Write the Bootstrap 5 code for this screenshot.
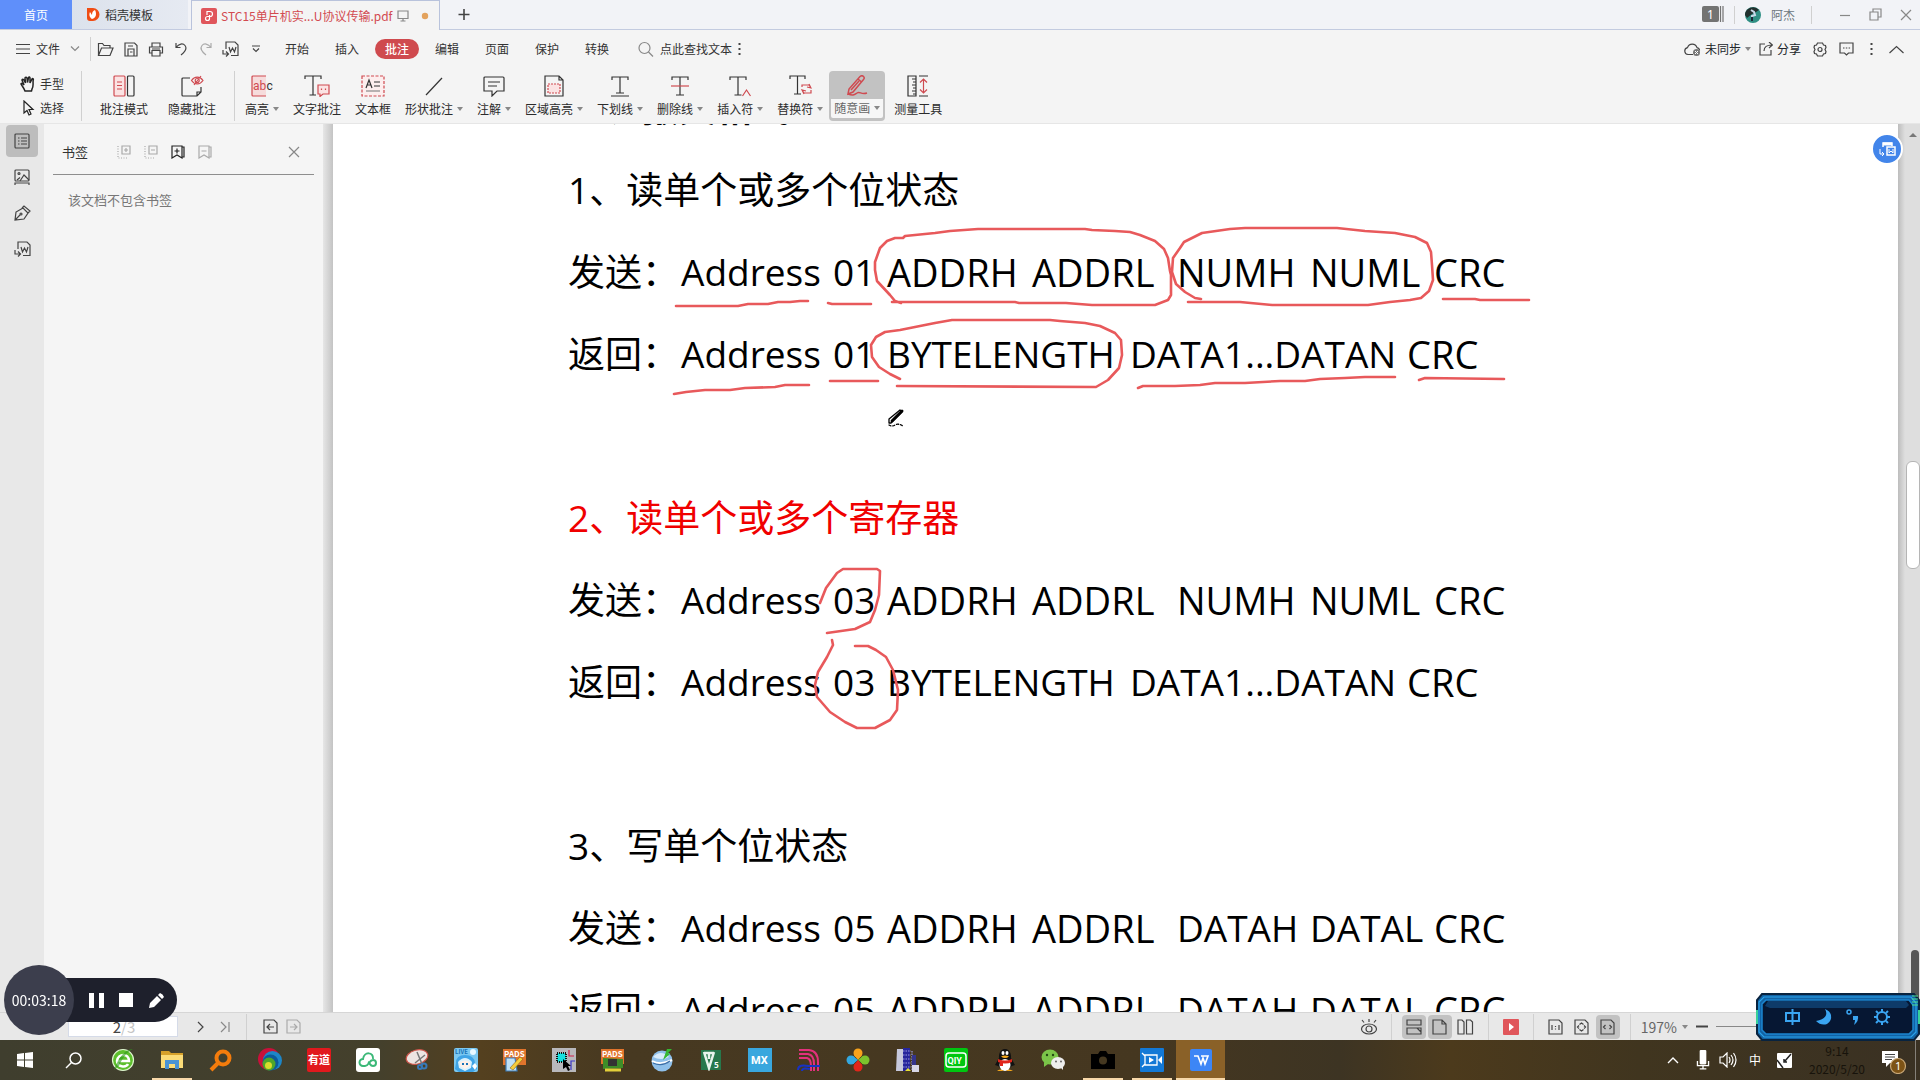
<!DOCTYPE html>
<html lang="zh-CN">
<head>
<meta charset="utf-8">
<meta name="viewport" content="width=device-width, initial-scale=1">
<title>STC15单片机实...U协议传输.pdf</title>
<link href="https://cdn.jsdelivr.net/npm/bootstrap@5.3.0/dist/css/bootstrap.min.css" rel="stylesheet">
<script src="https://cdn.jsdelivr.net/npm/bootstrap@5.3.0/dist/js/bootstrap.bundle.min.js"></script>
<style>
body{font-family:"Noto Sans CJK SC",sans-serif;font-size:12px;line-height:18px;color:#333;background:#f4f4f4}
button,input{font:inherit;color:inherit;background:none;border:0;padding:0}
button{display:inline-flex;align-items:center;justify-content:center}
svg{display:block;flex:none;fill:none;stroke:#444;stroke-width:1.2}
.r{stroke:#cf4a50}
svg.ic-mid{stroke:#888}
svg.ic-soft{stroke:#aaa}
svg.ic-dark{stroke:#222}
svg.ic-bold{stroke:#222;stroke-width:1.5}
svg.ic-plus{stroke-width:1.6}
.tabbar{height:30px;background:#f2f3f7;border-bottom:1px solid #c3cbe0}
.tab-home{width:72px;height:29px;background:#5f8ffa;color:#fff}
.tab-docer{width:116px;height:29px;background:linear-gradient(90deg,#dce2ec,#e6eaf2);padding-left:14px;gap:5px}
.tab-doc{width:249px;height:30px;margin-left:3px;background:#f4f4f4;border:1px solid #b9c3dc;border-bottom:0;color:#d24a50;padding-left:9px;gap:4px}
.rule{width:1px;background:#d0d0d0;flex:none}
.rule-tab{height:18px}
.rule-file{height:24px;margin:0 2px 0 10px}
.rule-tools{height:50px;margin:0 5px 0 8px}
.rule-modes{height:50px;margin-right:8px}
.user{gap:10px}
.menubar{height:38px}
.filebtn{gap:6px}
.mtabs{margin-left:4px}
.mtab{width:50px;height:20px}
.mtab.active span{background:#cf4a4e;color:#fff;border-radius:10px;padding:1px 10px;font-weight:500}
.qbtn{width:25px;height:24px}
.finder{gap:6px}
.ribbon{height:56px;border-bottom:1px solid #e6e6e6}
.pointer-tools{width:81px;gap:6px}
.toolset{gap:1px}
.tool{flex-direction:column;justify-content:flex-start;height:50px;padding:0 5px;color:#2b2b2b;border-radius:4px}
.tool svg{margin:4px 0 3px;stroke:#333}
.tool>span,.drop{display:flex;align-items:center;gap:4px}
.drop::after{content:"";border:3px solid transparent;border-top:4px solid #888;border-bottom:0}
.tool.active{background:#c2c2c2;padding:0;width:56px;color:#666}
.tool.active svg{margin-bottom:2px;stroke:#cf4a50;stroke-width:1.5}
.tool.active>span{background:#f6f6f6;width:52px;height:19px;justify-content:center;border-radius:0 0 2px 2px}
.mode{width:68px}
.viewer{min-height:0}
.rail{width:44px;background:#e8e8e8;padding-top:1px;gap:4px}
.rail button{width:32px;height:32px;border-radius:4px}
.rail .active{background:#bdbdbd}
.marks{width:279px;background:#f5f5f5;font-size:13px}
.marks-head{height:51px;margin:0 9px;padding:5px 14px 0 9px;border-bottom:1px solid #8e8e8e}
.marks-tools{margin-left:29px;gap:13px}
.empty-note{color:#777;padding:16px 24px}
.gutter{width:10px;background:linear-gradient(90deg,#e6e6e6,#c4c4c4)}
.sheet{background:#fff;overflow:hidden;position:relative;min-width:0}
.doc{margin-top:-57px;padding-left:235px;font-family:"Open Sans","Noto Sans CJK SC",sans-serif;font-size:37px;line-height:82px;color:#000;white-space:nowrap}
.doc p,.doc h2,.doc h3{margin:0;font-size:37px;line-height:82px;height:82px;font-weight:400;display:flex}
.doc h2{font-weight:700}
.doc .hot{color:#f00000}
.doc .lbl{width:113px}.doc .adr{width:152px}.doc .cod{width:54px}
.doc .w5{width:145px}.doc .w4{width:133px}.doc .w3{width:124px}.doc .wb{width:243px}.doc .wd{width:277px}
.doc .w5,.doc .w4,.doc .w3,.doc .crc{font-size:38px}
.doc .w4.dat,.doc .w3.dat{font-size:37px}
.ink{position:absolute;left:0;top:0;stroke:#e8595b;stroke-width:2.6;stroke-linejoin:round;stroke-linecap:round}
.scroller{width:22px;background:linear-gradient(90deg,#bdbdbd,#dedede 7px);position:relative}
.scroll-up{position:absolute;right:3px;top:9px}
.thumb-main{position:absolute;right:0;top:337px;width:14px;height:108px;background:#fff;border:1px solid #b5b5b5;border-radius:6px}
.thumb-dark{position:absolute;right:1px;top:826px;width:8px;height:62px;background:#555;border-radius:4px}
.to-word{position:absolute;right:17px;top:9px;width:32px;height:32px;border-radius:50%;background:#4285ea;border:2px solid #fff;z-index:2}
.to-word svg{stroke:#fff;stroke-width:1.5}
.status{height:29px;background:#e8e8e8;border-top:1px solid #d6d6d6;color:#666}
.status .rule{height:26px}
.pager{gap:16px;margin-left:19px}
.views{gap:2px}
.vbtn{width:24px;height:24px;border-radius:4px}
.vbtn.active{background:#c2c2c2}
.rule-a{margin:0 10px 0 13px}
.rule-b{margin:0 14px 0 10px}
.rule-c{margin:0 10px 0 14px}
.rule-d{margin:0 10px}
.zoomval{font-size:14px;gap:5px}
.pagebox{width:110px;height:21px;margin-left:68px;background:#fff;border:1px solid #d5dbe8;font-size:15px;color:#c5c5c5}
.pagebox input{width:52px;text-align:right;color:#444}
.zoomer{appearance:none;width:160px;height:14px;margin:0 44px 0 8px}
.zoomer::-webkit-slider-runnable-track{height:1px;background:#888}
.zoomer::-webkit-slider-thumb{appearance:none;width:9px;height:15px;margin-top:-7px;background:#999;border-radius:3px}
.taskbar{height:40px;background:linear-gradient(90deg,#3f3e2e 0,#44402c 380px,#54401f 480px,#473921 620px,#453720 1150px,#3d3423 1340px,#4c3a1c 1450px,#40351f 1640px,#3a3123 1920px)}
.taskbar svg{stroke:none}
.app{width:49px;height:40px;border-bottom:2px solid transparent;padding-top:2px}
.app.open{background:linear-gradient(#f8d9aa,#f8d9aa) center bottom/40px 2px no-repeat border-box}
.app.cur{background:#8a6128;border-color:#f8d9aa}
.app svg text{font-weight:700}
.clock{width:74px;color:#17130b;text-align:center;line-height:18px}
.rule-desk{height:40px;opacity:.5}
.rec{position:fixed;left:4px;bottom:45px;height:70px;z-index:5}
.rec-time{width:70px;height:70px;border-radius:50%;background:#3c3e4d;color:#fff;font-size:14px;z-index:1}
.rec-bar{height:44px;width:138px;margin-left:-35px;padding-left:50px;border-radius:0 22px 22px 0;background:#1e202c;gap:15px}
.rec-bar svg{fill:#fff;stroke:none}
.ime{position:fixed;right:0;bottom:39px;width:164px;height:48px;z-index:5}
.ime svg{stroke:none}
</style>
</head>
<body class="vh-100 d-flex flex-column overflow-hidden">

<header>
<div class="tabbar d-flex">
  <button class="tab-home">首页</button>
  <button class="tab-docer justify-content-start"><svg width="14" height="15" viewBox="0 0 14 15"><path d="M1 1h6a6.5 6.5 0 0 1 0 13H4a3 3 0 0 1-3-3z" fill="#f04d14" stroke="none"/><path d="M6 12C3 10 3 7 4 5l2 3c0-3 1-4 3-5 2 4 1 8-3 9z" fill="#fff" stroke="none"/></svg>稻壳模板</button>
  <div class="tab-doc d-flex align-items-center"><svg width="16" height="16" viewBox="0 0 16 16"><rect width="16" height="16" rx="2" fill="#e0565b" stroke="none"/><path d="M6 7V3.500h3a2.300 2.300 0 0 1 0 5H6.500a2 2 0 1 0 2 2V7" stroke="#fff"/></svg><span>STC15单片机实...U协议传输.pdf</span><svg class="ic-mid" width="12" height="12" viewBox="0 0 12 12"><path d="M1 1h10v7.500H1zM6 8.500V11M3.500 11h5"/></svg><svg class="ms-1" width="12" height="8" viewBox="0 0 12 8"><circle cx="8" cy="4" r="3.200" fill="#e3a25c" stroke="none"/></svg></div>
  <button class="px-3" aria-label="新建标签"><svg class="ic-plus" width="15" height="13" viewBox="0 0 15 13"><path d="M8 1v11M2.500 6.500h11"/></svg></button>
  <div class="ms-auto d-flex align-items-center">
    <div class="user d-flex align-items-center">
    <svg width="22" height="17" viewBox="0 0 22 17"><rect width="17" height="16" rx="2" fill="#737373" stroke="none"/><path d="M18.500 0v16M21 0v16" stroke="#737373"/><text x="5" y="12.500" font-size="12" font-family="Noto Sans" fill="#fff" stroke="none">1</text></svg>
    <div class="rule rule-tab"></div>
    <svg width="16" height="16" viewBox="0 0 16 16"><circle cx="8" cy="8" r="8" fill="#2f8f84" stroke="none"/><path d="M0 8a8 8 0 0 1 14-5l-3 2-4 2-5 4z" fill="#22302e" stroke="none"/><path d="M6 3l3 2 1 3-3 1v4" stroke="#c8d8e8" stroke-width="2"/><path d="M7 10v4" stroke="#1c2a3a" stroke-width="2"/></svg>
    <span class="text-secondary">阿杰</span>
    </div>
    <div class="rule rule-tab ms-3"></div>
    <button class="ms-4" aria-label="最小化"><svg class="ic-mid" width="17" height="17" viewBox="0 0 17 17"><path d="M4 9.500h10"/></svg></button>
    <button class="ms-3" aria-label="还原"><svg class="ic-mid" width="13" height="13" viewBox="0 0 13 13"><path d="M1 4h8v8H1zM4 4V1h8v8H9"/></svg></button>
    <button class="ms-3 me-2" aria-label="关闭"><svg class="ic-mid" width="14" height="12" viewBox="0 0 14 12"><path d="M3 1l10 10M13 1L3 11"/></svg></button>
  </div>
</div>

<nav class="menubar d-flex align-items-center">
  <button class="filebtn ms-3"><svg width="14" height="12" viewBox="0 0 14 12"><path d="M0 1.500h14M0 6h14M0 10.500h14"/></svg><span class="me-1">文件</span><svg class="ic-mid" width="10" height="6" viewBox="0 0 10 6"><path d="M1 .5l4 4 4-4"/></svg></button>
  <div class="rule rule-file"></div>
  <button class="qbtn" aria-label="打开"><svg width="17" height="15" viewBox="0 0 17 15"><path d="M1.500 13V1.500h4l1.500 2h6V6M1.500 13.500h11.500L16 6H4.500z"/></svg></button>
  <button class="qbtn" aria-label="保存"><svg width="14" height="15" viewBox="0 0 14 15"><path d="M1 1h9.500L13 3.500V14H1zM4 14V7h6v7M4 4h5M6 10h2.500"/></svg></button>
  <button class="qbtn" aria-label="打印"><svg width="16" height="15" viewBox="0 0 16 15"><path d="M4 5V1h8v4M4 11H1.500V5h13v6H12M4 8.500h8V14H4zM4 7h8"/></svg></button>
  <button class="qbtn" aria-label="撤销"><svg width="14" height="14" viewBox="0 0 14 14"><path d="M2 1v4.500h4.500M2 5.500C5 1.500 9 1 11 3.500S12 9 7 13"/></svg></button>
  <button class="qbtn" aria-label="重做"><svg class="ic-soft" width="14" height="14" viewBox="0 0 14 14"><path d="M12 1v4.500H7.500M12 5.500C9 1.500 5 1 3 3.500S2 9 7 13"/></svg></button>
  <button class="qbtn" aria-label="转为Word"><svg width="17" height="16" viewBox="0 0 17 16"><path d="M4 8V1h9l3 3v10.500H9M7 6l1.500 5L10.500 7l2 4L14 6M1 9v4h5M4 10.500L6.500 13 4 15.500"/></svg></button>
  <button class="qbtn" aria-label="更多"><svg width="8" height="8" viewBox="0 0 8 8"><path d="M0 1h8M1 3.500l3 3 3-3"/></svg></button>
  <div class="mtabs d-flex">
  <button class="mtab">开始</button><button class="mtab">插入</button><button class="mtab active"><span>批注</span></button><button class="mtab">编辑</button><button class="mtab">页面</button><button class="mtab">保护</button><button class="mtab">转换</button>
  </div>
  <button class="finder ms-3"><svg class="ic-mid" width="16" height="16" viewBox="0 0 16 16"><circle cx="6.500" cy="7" r="5.500"/><path d="M10.500 11l4.500 4.500"/></svg><span>点此查找文本</span><svg width="3" height="14" viewBox="0 0 3 14"><path d="M1.500 1v2M1.500 6v2M1.500 11v2" stroke-width="2"/></svg></button>
  <div class="ms-auto d-flex align-items-center">
    <button><svg class="me-1" width="17" height="14" viewBox="0 0 17 14"><path d="M9 12.500H4a3.500 3.500 0 0 1-.5-6.900 5 5 0 0 1 9.500 0q2.500.5 2.500 3"/><circle cx="12.500" cy="10.500" r="3.500" fill="#777" stroke="none"/><path d="M11 9l3 3M14 9l-3 3" stroke="#fff" stroke-width="1"/></svg><span class="drop text-dark">未同步</span></button>
    <button class="ms-2"><svg width="14" height="14" viewBox="0 0 14 14"><path d="M6 2H1v11h11V8M5 9c0-4 3-6 8-6M10 0l3.500 3L10 6"/></svg><span class="ms-1 text-dark">分享</span></button>
    <button class="ms-2 ps-1" aria-label="设置"><svg width="14" height="15" viewBox="0 0 14 15"><path d="M4.500 1h5l1 2 2 .5.500 2-1 2 1 2-.5 2-2 .5-1 2h-5l-1-2-2-.5-.5-2 1-2-1-2 .5-2 2-.5z"/><circle cx="7" cy="7.500" r="2"/></svg></button>
    <button class="ms-2 ps-1" aria-label="反馈"><svg width="15" height="14" viewBox="0 0 15 14"><path d="M1 1h13v10H9.500L7.500 13l-2-2H1z"/><path d="M4 6h1.500M6.800 6h1.500M9.600 6h1.500"/></svg></button>
    <button class="ms-3" aria-label="更多"><svg width="3" height="14" viewBox="0 0 3 14"><path d="M1.500 1v2M1.500 6v2M1.500 11v2" stroke-width="2"/></svg></button>
    <button class="mx-3" aria-label="收起"><svg width="15" height="9" viewBox="0 0 15 9"><path d="M.5 8l7-6.500 7 6.500"/></svg></button>
  </div>
</nav>

<div class="ribbon d-flex align-items-center">
  <div class="pointer-tools d-flex flex-column ps-3">
    <button class="justify-content-start ms-1"><svg class="ic-bold me-1" width="16" height="16" viewBox="0 0 16 16"><path d="M5 15C4 12 2 10 1 8c0-1 1-1 3 1L2 4c0-1 1-1 2 0l1.500 3L5 2c0-1 1.500-1 2 0l.5 4.500L8.500 1.500c.5-1 1.500-.5 1.500.5V7l2-4c.5-.8 1.500-.4 1.300.5C12.500 7 14 10 12 13l-.5 2z"/></svg>手型</button>
    <button class="justify-content-start ms-1"><svg class="ic-dark me-1" width="16" height="16" viewBox="0 0 16 16"><path d="M4 1v12l3-2.500L9 15l2-1-2-4.500h4z"/></svg>选择</button>
  </div>
  <div class="rule rule-modes"></div>
  <button class="tool mode"><svg width="22" height="22" viewBox="0 0 22 22"><rect class="r" x="1" y="1" width="11" height="20" rx="1" fill="#fbe3e3"/><path class="r" d="M4 7h5M4 10.500h5M4 14h5"/><rect x="14.500" y="1" width="6.500" height="20" rx="1"/></svg>批注模式</button>
  <button class="tool mode"><svg width="24" height="22" viewBox="0 0 24 22"><path d="M10 3H3a1 1 0 0 0-1 1v16a1 1 0 0 0 1 1h14l4-4v-5M17 21v-4h4"/><path class="r" d="M11.500 5.500c3-4.500 8.500-4.500 11.500 0-3 4.500-8.500 4.500-11.500 0zM14 10L21 1"/><circle class="r" cx="17.200" cy="5.500" r="2"/></svg>隐藏批注</button>
  <div class="rule rule-tools"></div>
  <div class="toolset d-flex">
  <div class="d-flex gap-1">
  <button class="tool"><svg width="22" height="22" viewBox="0 0 22 22"><rect x="1" y="1" width="14" height="20" fill="#f6dcdc" stroke="none"/><path class="r" d="M15 1H2a1 1 0 0 0-1 1v18a1 1 0 0 0 1 1h13"/><text x="2" y="15" font-size="12" font-family="Roboto" fill="#cf4a50" stroke="none">ab</text><text x="15.500" y="15" font-size="12" font-family="Roboto" fill="#333" stroke="none">c</text></svg><span class="drop">高亮</span></button>
  <button class="tool"><svg width="26" height="22" viewBox="0 0 26 22"><path d="M1 4V1h16v3M9 1v19M5.500 20H12"/><path class="r" d="M14 10h11v9h-6l-3 2.500V19h-2z" fill="#fbe3e3"/><path class="r" d="M17.500 13.500v1.500M21.500 13.500v1.500"/></svg>文字批注</button>
  <button class="tool"><svg width="24" height="22" viewBox="0 0 24 22"><rect class="r" x="1" y="1" width="22" height="20" fill="#fdeeee" stroke-dasharray="3 1.500"/><path d="M5 13L8 5l3 8M6 10h4M13 7h6M13 11h6"/><path d="M5 16h14" stroke="#888"/></svg>文本框</button>
  <button class="tool"><svg width="18" height="22" viewBox="0 0 18 22"><path d="M1 20L17 3"/></svg><span class="drop">形状批注</span></button>
  <button class="tool"><svg width="22" height="22" viewBox="0 0 22 22"><path d="M2 2h18a1 1 0 0 1 1 1v13h-7l-5 5v-5H1V3a1 1 0 0 1 1-1zM5 7h12M5 11h9"/></svg><span class="drop">注解</span></button>
  <button class="tool"><svg width="20" height="22" viewBox="0 0 20 22"><path d="M1 1h14l4 4v16H1zM15 1v4h4"/><rect class="r" x="4" y="9" width="12" height="9" fill="#fbe3e3" stroke-dasharray="2 1"/></svg><span class="drop">区域高亮</span></button>
  <button class="tool"><svg width="20" height="22" viewBox="0 0 20 22"><path d="M2 5V2h16v3M10 2v16M6 18h8M1 21h18"/></svg><span class="drop">下划线</span></button>
  <button class="tool"><svg width="20" height="22" viewBox="0 0 20 22"><path d="M2 5V2h16v3M10 2v18M6 20h8"/><path class="r" d="M1 11h18"/></svg><span class="drop">删除线</span></button>
  <button class="tool"><svg width="22" height="22" viewBox="0 0 22 22"><path d="M1 5V2h16v3M9 2v18M5.500 20h7"/><path class="r" d="M13.500 21l4-6 4 6"/></svg><span class="drop">插入符</span></button>
  <button class="tool"><svg width="23" height="22" viewBox="0 0 23 22"><path d="M1 4V1h15v3M8.500 1v18M5 19h7"/><path class="r" d="M13 12v-2h7l2 3M20 9l2 4-4-1M22 15v3h-7l-2-3M15 19l-2-4 4 1"/></svg><span class="drop">替换符</span></button>
  </div>
  <div class="d-flex gap-1">
  <button class="tool active"><svg width="22" height="22" viewBox="0 0 22 22"><path d="M2 19l1-5L14 1.500q2-1.500 3.500 0t0 3L7 17zM12 4l3.500 3M5 15l8-9M2 19c5 2 6 1 9-1s4 2 10 0"/></svg><span class="drop">随意画</span></button>
  <button class="tool"><svg width="22" height="22" viewBox="0 0 22 22"><path d="M1 1h8v20H1zM5 4h4M6 7h3M5 10h4M6 13h3M5 16h4M6 19h3M12 1h9M12 21h9"/><path class="r" d="M16.500 4v14M13 7.500L16.500 4 20 7.500M13 14.500l3.500 3.500 3.500-3.500"/></svg>测量工具</button>
  </div></div>
</div>
</header>

<main class="viewer d-flex flex-grow-1">
  <nav class="rail d-flex flex-column align-items-center">
    <button class="active" aria-label="书签"><svg width="16" height="16" viewBox="0 0 16 16"><rect x="1" y="1" width="14" height="14" rx="1"/><path d="M4 5h1.500M7 5h6M4 8h1.500M7 8h6M4 11h1.500M7 11h6"/></svg></button>
    <button aria-label="缩略图"><svg width="16" height="17" viewBox="0 0 16 17"><rect x="1" y="1" width="14" height="11" rx="1"/><circle cx="5" cy="4.500" r="1"/><path d="M3 11l3-2.500M6 12l4-6 5 5M1 16v-2h14v2"/></svg></button>
    <button aria-label="签名"><svg width="17" height="16" viewBox="0 0 17 16"><path d="M1 15l1-8 7-4 5 5-4 6zM8 3l2-2 6 5-2 2M1 15l5-5"/><circle cx="7" cy="9" r="1"/></svg></button>
    <button aria-label="转为Word"><svg width="17" height="16" viewBox="0 0 17 16"><path d="M4 8V1h9l3 3v10.500H9M7 6l1.500 5L10.500 7l2 4L14 6M1 9v4h5M4 10.500L6.500 13 4 15.500"/></svg></button>
  </nav>
  <aside class="marks">
    <div class="marks-head d-flex align-items-center">
      <span>书签</span>
      <div class="marks-tools d-flex">
      <button aria-label="展开"><svg class="ic-soft" width="14" height="14" viewBox="0 0 14 14"><path d="M5 1h8v8H5zM9 3v4M7 5h4"/><path d="M1 1v12h10" stroke-dasharray="1 1.500"/></svg></button>
      <button aria-label="折叠"><svg class="ic-soft" width="14" height="14" viewBox="0 0 14 14"><path d="M5 1h8v8H5zM7 5h4"/><path d="M1 1v12h10" stroke-dasharray="1 1.500"/></svg></button>
      <button aria-label="添加书签"><svg class="ic-dark" width="14" height="14" viewBox="0 0 14 14"><path d="M1 1h10v12l-5-3-5 3zM11 2h2v10h-2M6 3.500v5M3.500 6h5"/></svg></button>
      <button aria-label="删除书签"><svg class="ic-soft" width="14" height="14" viewBox="0 0 14 14"><path d="M1 1h10v12l-5-3-5 3zM11 2h2v10h-2M3.500 6h5"/></svg></button>
      </div>
      <button class="ms-auto" aria-label="关闭"><svg class="ic-mid" width="12" height="12" viewBox="0 0 12 12"><path d="M1 1l10 10M11 1L1 11"/></svg></button>
    </div>
    <div class="empty-note">该文档不包含书签</div>
  </aside>
  <div class="gutter"></div>
  <section class="flex-grow-1 d-flex position-relative">
  <div class="sheet flex-grow-1">
    <article class="doc">
      <h2>二、报文格式</h2>
      <h3>1、读单个或多个位状态</h3>
      <p><span class="lbl">发送：</span><span class="adr">Address</span><span class="cod">01</span><span class="w5">ADDRH</span><span class="w5">ADDRL</span><span class="w4">NUMH</span><span class="w3">NUML</span><span class="crc">CRC</span></p>
      <p><span class="lbl">返回：</span><span class="adr">Address</span><span class="cod">01</span><span class="wb">BYTELENGTH</span><span class="wd">DATA1...DATAN</span><span class="crc">CRC</span></p>
      <p></p>
      <h3 class="hot">2、读单个或多个寄存器</h3>
      <p><span class="lbl">发送：</span><span class="adr">Address</span><span class="cod">03</span><span class="w5">ADDRH</span><span class="w5">ADDRL</span><span class="w4">NUMH</span><span class="w3">NUML</span><span class="crc">CRC</span></p>
      <p><span class="lbl">返回：</span><span class="adr">Address</span><span class="cod">03</span><span class="wb">BYTELENGTH</span><span class="wd">DATA1...DATAN</span><span class="crc">CRC</span></p>
      <p></p>
      <h3>3、写单个位状态</h3>
      <p><span class="lbl">发送：</span><span class="adr">Address</span><span class="cod">05</span><span class="w5">ADDRH</span><span class="w5">ADDRL</span><span class="w4 dat">DATAH</span><span class="w3 dat">DATAL</span><span class="crc">CRC</span></p>
      <p><span class="lbl">返回：</span><span class="adr">Address</span><span class="cod">05</span><span class="w5">ADDRH</span><span class="w5">ADDRL</span><span class="w4 dat">DATAH</span><span class="w3 dat">DATAL</span><span class="crc">CRC</span></p>
    </article>
    <svg class="ink" width="1565" height="887" viewBox="333 124 1565 887">
      <path d="M676 306H738L748 304H768L778 302 790 302 800 301 808 301"/>
      <path d="M828 303L832 304H871"/>
      <path d="M901 303L895 301 890 295 877 281 875 270V262L880 248 887 241 895 238 903 238 905 236 915 235 935 233 950 231 978 229H1085L1092 230 1115 231 1130 232 1140 235 1155 241 1164 249 1168 258 1170 271 1171 275V295L1168 300 1155 305H1092L1066 303H1019L1015 302H892"/>
      <path d="M1201 299L1195 298 1185 292 1176 284 1172 272 1173 258 1180 248 1184 242 1202 233 1230 229 1245 228H1337L1365 231 1395 233 1415 237 1427 243 1431 252 1432 265 1433 280 1429 291 1421 298 1410 300 1390 302 1368 305H1272L1240 302H1188"/>
      <path d="M1443 299H1475L1480 300H1529"/>
      <path d="M674 394L686 392 705 390H730L745 388 775 387 785 385H809"/>
      <path d="M830 381H878"/>
      <path d="M900 379L890 374 879 367 872 357 871 345 876 337 885 332 900 330 915 327 935 323 952 320H1050L1060 321 1085 323 1100 326 1115 333 1121 340 1122 355 1119 368 1108 380 1096 387 897 386"/>
      <path d="M1138 388L1143 386H1175L1200 385 1215 383H1245L1280 381H1305L1320 379 1345 378 1365 377H1395"/>
      <path d="M1419 380L1425 378 1504 379"/>
      <path d="M820 603L826 588 837 573 843 569H877L880 571 879 595 875 610 870 622 855 629 827 633"/>
      <path d="M832 640L833 645 827 657 818 672 815 685 817 697 830 712 845 722 857 728H875L890 720 897 710 898 690 893 670 886 657 876 650 868 646H855"/>
      <g stroke="#000" stroke-width="1.300"><path d="M889 423V419L900 410 902 412 891 423z"/><path d="M892 421L902 411" stroke-width="3"/><path d="M889 425q3 2 6 0t8 1" stroke-dasharray="2 2"/></g>
    </svg>
  </div>
  <div class="scroller"><svg class="scroll-up" width="8" height="5" viewBox="0 0 8 5"><path d="M0 4L4 0l4 4z" fill="#777" stroke="none"/></svg><div class="thumb-main"></div><div class="thumb-dark"></div></div>
  <button class="to-word" aria-label="转为Word"><svg width="18" height="16" viewBox="0 0 18 16"><path d="M5 6V2h9v3"/><path d="M5 3h9" stroke-width="3"/><rect x="9" y="6" width="8" height="8"/><path d="M11 8v4l2-2 2 2V8M2 8v5h4M4 11l2 2-2 2" stroke-width="1"/></svg></button>
  </section>
</main>

<footer class="status d-flex align-items-center">
  <label class="pagebox d-flex align-items-center"><input value="2" aria-label="页码">/3</label>
  <div class="pager d-flex align-items-center">
  <button aria-label="下一页"><svg width="7" height="12" viewBox="0 0 7 12"><path d="M1 1l5 5-5 5"/></svg></button>
  <button aria-label="末页"><svg class="ic-mid" width="10" height="12" viewBox="0 0 10 12"><path d="M1 1l5 5-5 5M9 1v10"/></svg></button>
  <div class="rule"></div>
  <div class="d-flex gap-2">
  <button aria-label="后退"><svg width="15" height="15" viewBox="0 0 15 15"><path d="M1 1h10l3 3v10H1zM4 8h7M7 5L4 8l3 3"/></svg></button>
  <button aria-label="前进"><svg class="ic-soft" width="15" height="15" viewBox="0 0 15 15"><path d="M1 1h10l3 3v10H1zM4 8h7M8 5l3 3-3 3"/></svg></button>
  </div></div>
  <div class="ms-auto d-flex align-items-center">
    <button aria-label="护眼"><svg width="18" height="17" viewBox="0 0 18 17"><ellipse cx="9" cy="11" rx="7.500" ry="5"/><circle cx="9" cy="11" r="3"/><path d="M9 1v3M2 2l2 2.500M16 2l-2 2.500"/></svg></button>
    <div class="rule rule-a"></div>
    <div class="views d-flex">
    <button class="vbtn active" aria-label="连续"><svg width="16" height="16" viewBox="0 0 16 16"><path d="M1 1h14v5H1zM15 9H1v6h14zM11 9l4 4"/></svg></button>
    <button class="vbtn active" aria-label="单页"><svg width="15" height="16" viewBox="0 0 15 16"><path d="M1 1h9l4 4v10H1zM10 1v4h4"/></svg></button>
    <button class="vbtn" aria-label="双页"><svg width="17" height="16" viewBox="0 0 17 16"><path d="M1 1h4l2 2v12H1zM9.500 1h4l2 2v12h-6z"/></svg></button>
    </div>
    <div class="rule rule-b"></div>
    <button aria-label="播放"><svg width="16" height="16" viewBox="0 0 16 16"><rect width="16" height="16" rx="1" fill="#e0565b" stroke="none"/><path d="M6 4l5 4-5 4z" fill="#fff" stroke="none"/></svg></button>
    <div class="rule rule-c"></div>
    <div class="views d-flex">
    <button class="vbtn" aria-label="实际大小"><svg width="15" height="16" viewBox="0 0 15 16"><path d="M1 1h10l3 3v11H1zM4 6v5M11 6v5M7.500 7v1M7.500 9.500v1"/></svg></button>
    <button class="vbtn" aria-label="适合页面"><svg width="15" height="16" viewBox="0 0 15 16"><path d="M1 1h10l3 3v11H1zM5.500 5.500l2-1.500 2 1.500M5.500 10.500l2 1.500 2-1.500M5 6.500L3.500 8 5 9.500M10 6.500L11.500 8 10 9.500"/></svg></button>
    <button class="vbtn active" aria-label="适合宽度"><svg width="15" height="16" viewBox="0 0 15 16"><path d="M1 1h10l3 3v11H1zM5.500 6l-2 2 2 2M9.500 6l2 2-2 2"/></svg></button>
    </div>
    <div class="rule rule-d"></div>
    <button class="drop zoomval">197%</button>
    <button class="ms-2" aria-label="缩小"><svg width="12" height="3" viewBox="0 0 12 3"><path d="M0 1.500h12" stroke-width="2"/></svg></button>
    <input class="zoomer" type="range" min="0" max="100" value="50" aria-label="缩放">
  </div>
</footer>

<div class="taskbar d-flex">
  <button class="app" aria-label="开始"><svg width="16" height="16" viewBox="0 0 16 16"><path fill="#fff" d="M0 2l7-1v6.500H0zM8 1l8-1v7.500H8zM0 8.500h7V15l-7-1zM8 8.500h8V16l-8-1z"/></svg></button>
  <button class="app" aria-label="搜索"><svg width="17" height="17" viewBox="0 0 17 17"><g stroke="#fff" stroke-width="1.500"><circle cx="10.500" cy="6.500" r="5.500"/><path d="M6.500 10.500L1 16"/></g></svg></button>
  <button class="app" aria-label="浏览器"><svg width="24" height="24" viewBox="0 0 24 24"><circle cx="12" cy="12" r="10.500" fill="#5dbf2c" stroke="#dff5cf"/><path d="M6 13h12c0-8-11-8-12 0 0 6 9 7 11 3" stroke="#fff" stroke-width="2.500"/><path d="M3 22C8 8 15 1 22 1c-6 3-10 8-14 17" fill="#2f9a1c" opacity=".6"/></svg></button>
  <button class="app open" aria-label="资源管理器"><svg width="22" height="20" viewBox="0 0 22 20"><path d="M0 1h8l2 2h12v15H0z" fill="#d6a12b"/><path d="M0 5h22v13H0z" fill="#fbdc78"/><path d="M4 10h14v9h-4v-5H8v5H4z" fill="#4a94d4"/></svg></button>
  <button class="app" aria-label="Everything"><svg width="23" height="23" viewBox="0 0 23 23"><g stroke="#f47c0c" stroke-width="4"><circle cx="14" cy="9" r="6.500"/><path d="M9.500 13.500L2 21"/></g></svg></button>
  <button class="app" aria-label="浏览器2"><svg width="25" height="24" viewBox="0 0 25 24"><circle cx="12" cy="11" r="11" fill="#c9103a"/><circle cx="15.500" cy="12.500" r="9.500" fill="#1d86c8"/><circle cx="13.500" cy="14.500" r="8" fill="#0d5a9a"/><circle cx="12" cy="16" r="6.500" fill="#4fa62a"/><circle cx="11.500" cy="17.500" r="3.500" fill="#d8dc2c"/></svg></button>
  <button class="app" aria-label="有道"><svg width="24" height="24" viewBox="0 0 24 24"><rect width="24" height="24" rx="2" fill="#e1191d"/><text x="1" y="16" font-size="11" fill="#fff">有道</text></svg></button>
  <button class="app" aria-label="云盘"><svg width="24" height="24" viewBox="0 0 24 24"><rect width="24" height="24" rx="3" fill="#fff"/><path d="M9 18H7a3.500 3.500 0 0 1 0-7c1-8 11-7 10 0M9 18c4 0 4-6 8-6a3 3 0 0 1 0 6c-3 0-3-3-5-4" stroke="#3bb878" stroke-width="2"/></svg></button>
  <button class="app" aria-label="截图"><svg width="24" height="24" viewBox="0 0 24 24"><ellipse cx="12" cy="9" rx="11" ry="7" transform="rotate(-15 12 9)" fill="#ede5e2" stroke="#cf574d"/><path d="M12 4l5 12M20 7l-10 8" stroke="#777" stroke-width="1.500"/><circle cx="19" cy="18" r="2.500" stroke="#3779b9" stroke-width="2"/><circle cx="15" cy="19" r="2" stroke="#3779b9" stroke-width="2"/></svg></button>
  <button class="app" aria-label="直播"><svg width="24" height="24" viewBox="0 0 24 24"><rect width="24" height="24" rx="2" fill="#7cc8f0"/><path d="M2 15q0-8 9-8t10 8l2 6-4 3H5l-4-3z" fill="#3fa4e6"/><path d="M4 14q7-8 14 0l-1 6-6 3-6-3z" fill="#d8f2ff"/><path d="M6 14q5-3 10 0v4l-5 3-5-3z" fill="#fff0e8"/><path d="M8 16h2M12 16h2" stroke="#1873b8" stroke-width="2"/><circle cx="19" cy="4" r="3" fill="#e8f8ff"/><path d="M18 18l3-3 2 3-2 4z" fill="#fff"/><text x="1" y="6" font-size="6" fill="#1873b8">LIVE</text></svg></button>
  <button class="app" aria-label="PADS Logic"><svg width="25" height="25" viewBox="0 0 25 25"><path d="M1 1h23v16H1z" fill="#e1742c"/><text x="2" y="9" font-size="8" fill="#fff">PADS</text><path d="M4 10h9l2 13H4z" fill="#bfe0f5" stroke="#3c7cba"/><path d="M8 20L18 9l3 2-10 11z" fill="#f5cc3c" stroke="#8a6414" stroke-width=".6"/></svg></button>
  <button class="app" aria-label="PADS Router"><svg width="24" height="24" viewBox="0 0 24 24"><rect width="24" height="24" fill="#b8b8bc"/><path d="M17 2v6h5" stroke="#d2204a"/><path d="M19 22v-9h4" stroke="#3a35c9"/><rect x="5" y="5" width="9" height="9" fill="#18e0e0" stroke="#111" stroke-dasharray="1 1" stroke-width="2"/><path d="M11 11v10l3-2 2 4 2-1-2-4h3z" fill="#000"/></svg></button>
  <button class="app" aria-label="PADS Layout"><svg width="25" height="25" viewBox="0 0 25 25"><path d="M1 1h23v15H1z" fill="#e1742c"/><text x="2" y="9" font-size="8" fill="#fff">PADS</text><path d="M3 10l20 1v9l-20 1z" fill="#3e8d28"/><rect x="8" y="11" width="9" height="7" fill="#333"/><path d="M5 22h16" stroke="#e2cf3a" stroke-width="3"/></svg></button>
  <button class="app" aria-label="地球"><svg width="24" height="24" viewBox="0 0 24 24"><circle cx="12" cy="13" r="10.500" fill="#8fc0ea"/><path d="M3 9q8-8 16 0-8 4-16 0z" fill="#d8ebfa"/><path d="M2 13q9 5 20-1" stroke="#fff" stroke-width="2"/><path d="M3 15q9 4 17-2" stroke="#3b6fa8"/><path d="M13 12l4-11 5 0-4 4 2 1z" fill="#35b832"/></svg></button>
  <button class="app" aria-label="Keil"><svg width="22" height="22" viewBox="0 0 22 22"><rect x="1" y="1" width="20" height="20" fill="#27784c"/><path d="M4 3l5 16 5-16M9 3v7M4 4h10" stroke="#e8f4ec" stroke-width="2.500"/><text x="14" y="19" font-size="8" fill="#fff">5</text></svg></button>
  <button class="app" aria-label="CubeMX"><svg width="24" height="24" viewBox="0 0 24 24"><rect width="24" height="24" fill="#39a7de"/><text x="3" y="16" font-size="11" fill="#fff" font-family="Roboto">MX</text></svg></button>
  <button class="app" aria-label="布线"><svg width="24" height="24" viewBox="0 0 24 24"><g stroke="#e3317c" stroke-width="2"><path d="M2 2h10q9 1 9 12v9M2 6h9q6 1 6 10v7M2 10h8q4 1 4 8v5"/></g><g stroke="#1732c4" stroke-width="2"><path d="M1 22c0-5 5-5 10-4h12M5 23c0-3 4-3 8-2"/></g></svg></button>
  <button class="app" aria-label="四叶"><svg width="24" height="24" viewBox="0 0 24 24"><circle cx="12" cy="5" r="4.500" fill="#f8a31c"/><path d="M8 7h8l-4 5z" fill="#f8a31c"/><circle cx="5" cy="12" r="4.500" fill="#34a8e0"/><path d="M7 8l5 4-5 4z" fill="#34a8e0"/><circle cx="19" cy="12" r="4.500" fill="#7cc22d"/><path d="M17 8l-5 4 5 4z" fill="#7cc22d"/><circle cx="12" cy="19" r="4.500" fill="#e0261b"/><path d="M8 17l4-5 4 5z" fill="#e0261b"/></svg></button>
  <button class="app" aria-label="大厦"><svg width="24" height="24" viewBox="0 0 24 24"><path d="M2 1h6v22H1z" fill="#c7c9dc"/><path d="M8 0h7v23H8z" fill="#26269c"/><path d="M8 3h8M8 7h8M8 11h8M8 15h8M8 19h8M17 3v20" stroke="#9c9ce0" stroke-dasharray="1.500 1"/><path d="M17 7h4v16h-4z" fill="#34348c"/><path d="M17 17h7v7h-7z" fill="#d7d7e8"/><path d="M10 23l3-3 3 3z" fill="#e6e035"/></svg></button>
  <button class="app" aria-label="爱奇艺"><svg width="24" height="24" viewBox="0 0 24 24"><rect width="24" height="24" rx="2" fill="#00c610"/><rect x="2" y="5" width="20" height="14" rx="3" stroke="#fff" stroke-width="1.500"/><text x="3.500" y="16" font-size="9" fill="#fff" font-family="Roboto">QIY</text></svg></button>
  <button class="app" aria-label="QQ"><svg width="22" height="24" viewBox="0 0 22 24"><path d="M5 10C4-2 18-2 17 10l4 7-3 1q-7 7-14 0l-3-1z" fill="#111"/><ellipse cx="11" cy="17" rx="5.500" ry="6" fill="#fff"/><path d="M4 11q7 3 14 0v3q-7 3-14 0z" fill="#e1251b"/><path d="M6 14h3v4H6z" fill="#e1251b"/><ellipse cx="9" cy="5" rx="1.500" ry="2" fill="#fff"/><ellipse cx="13" cy="5" rx="1.500" ry="2" fill="#fff"/><path d="M7 8.500q4-2 8 0-4 3-8 0z" fill="#f5a81c"/><path d="M3 23q3-3 7 0zM12 23q3-3 7 0z" fill="#f5a81c"/></svg></button>
  <button class="app" aria-label="微信"><svg width="25" height="22" viewBox="0 0 25 22"><ellipse cx="9" cy="8" rx="8.500" ry="7.500" fill="#7bc549"/><path d="M3 13v5l4-3z" fill="#7bc549"/><ellipse cx="17" cy="14" rx="7" ry="6" fill="#eee"/><path d="M19 18l3 3v-4z" fill="#eee"/><circle cx="6" cy="6" r="1.200" fill="#234a14"/><circle cx="12" cy="6" r="1.200" fill="#234a14"/><circle cx="15" cy="12.500" r="1" fill="#666"/><circle cx="20" cy="12.500" r="1" fill="#666"/></svg></button>
  <button class="app open" aria-label="相机"><svg width="24" height="20" viewBox="0 0 24 20"><path d="M0 4h7l2-3h6l2 3h7v15H0z" fill="#000"/><circle cx="12" cy="10.500" r="4" fill="#453820"/></svg></button>
  <button class="app open" aria-label="录屏"><svg width="24" height="24" viewBox="0 0 24 24"><rect width="24" height="24" rx="1" fill="#1379d6"/><path d="M5 7h12v10H5zM2 5l3 3M2 19l3-3" stroke="#fff" stroke-width="1.300"/><path d="M9 9l5 3-5 3zM18 12l4-4v8z" fill="#fff"/></svg></button>
  <button class="app cur" aria-label="WPS"><svg width="22" height="22" viewBox="0 0 22 22"><rect width="22" height="22" rx="2" fill="#3d86f6"/><path d="M4 7h4l3 8 2-6 2 6 3-8h-7" stroke="#fff" stroke-width="1.600"/></svg></button>
  <div class="ms-auto d-flex align-items-center">
    <svg width="12" height="8" viewBox="0 0 12 8"><path d="M1 7l5-5 5 5" stroke="#fff" stroke-width="1.400"/></svg>
    <svg class="ms-3 me-1" width="16" height="20" viewBox="0 0 14 18"><rect x="4" y="0" width="6" height="13" rx="1" fill="#fff"/><path d="M2 10v4h10v-4M7 14v3M4 17h6" stroke="#fff"/></svg>
    <svg class="ms-1" width="18" height="16" viewBox="0 0 18 16"><path d="M1 5h3l4-4v14l-4-4H1zM10 5q2 3 0 6M12 3q4 5 0 10M14.500 1q5 7 0 14" stroke="#fff"/></svg>
    <span class="text-white mx-2 px-1">中</span>
    <svg class="ms-1" width="15" height="15" viewBox="0 0 15 15"><rect width="15" height="15" rx="1" fill="#fff"/><path d="M0 7l6 8M8 8l6-7M7 6v3h3" stroke="#222" stroke-width="1.500"/></svg>
    <div class="clock ms-2">9:14<br>2020/5/20</div>
    <svg class="ms-2" width="25" height="28" viewBox="0 0 25 28"><path d="M0 5h16v12H8l-4 4v-4H0z" fill="#fff"/><path d="M3 8.500h10M3 11h10M3 13.500h7" stroke="#444"/><circle cx="16" cy="20" r="7.500" fill="#7d5316" stroke="#c9a878"/><text x="13" y="24" font-size="11" fill="#fff" font-family="Noto Sans">1</text></svg>
    <div class="rule rule-desk ms-2 me-1"></div>
  </div>
</div>

<div class="rec d-flex align-items-center">
  <div class="rec-time d-flex align-items-center justify-content-center">00:03:18</div>
  <div class="rec-bar d-flex align-items-center">
    <button aria-label="暂停"><svg width="15" height="15" viewBox="0 0 15 15"><path d="M0 0h5v15H0zM10 0h5v15h-5z"/></svg></button>
    <button aria-label="停止"><svg width="15" height="14" viewBox="0 0 15 14"><path d="M0 0h14v14H0z"/></svg></button>
    <button aria-label="画笔"><svg width="15" height="15" viewBox="0 0 15 15"><path d="M0 15l1-5 7-7 4 4-7 7zM9 2l2-2q3 1 4 4l-2 2z"/></svg></button>
  </div>
</div>

<div class="ime"><svg width="164" height="48" viewBox="0 0 164 48">
  <path d="M6 1h152l5 6v34l-5 6H6l-5-6V7z" fill="#1262a4" stroke="#08233f" stroke-width="2"/>
  <path d="M8 4h147l5 6v29l-5 5H8l-5-5V9z" stroke="#2aa3ea"/>
  <path d="M10 7h143l4 5v25l-4 4H10l-4-4V11z" fill="#061733" stroke="#1b85cf" stroke-width="1.500"/>
  <path d="M12 8h138l3 4-3 3H14l-5-2z" fill="#14538e" opacity=".6"/><path d="M1 17v14M163 17v14" stroke="#37d09a" stroke-width="2"/>
  <path d="M156 3h6M156 6h6M156 9h6M156 12h6" stroke="#4fe08f"/>
  <g stroke="#3aa5f2" stroke-width="2"><path d="M30 20h13v8H30zM36.500 16v16"/><circle cx="126" cy="24" r="5"/><path d="M126 16v3M126 29v3M118 24h3M131 24h3M120 18l2 2M130 28l2 2M132 18l-2 2M122 28l-2 2"/><circle cx="93" cy="19" r="2" stroke-width="1.500"/></g>
  <path d="M69 16q5 9-9 12 5 5 11 3 5-3 4-9-1-4-6-6zM97 23h5q1 5-4 9 1-3 1-5h-2z" fill="#3aa5f2"/>
</svg></div>
</body>
</html>
